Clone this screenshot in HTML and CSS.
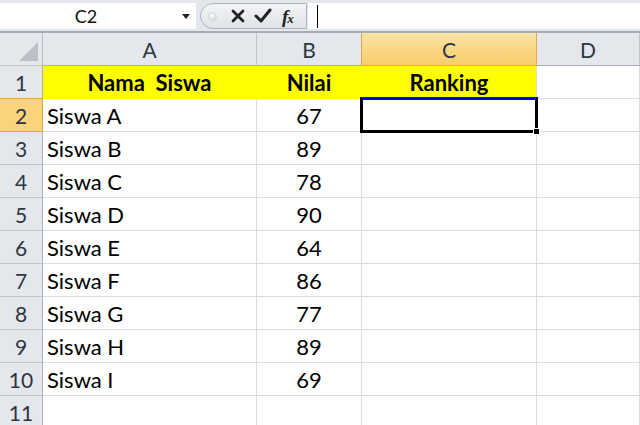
FILE: index.html
```html
<!DOCTYPE html>
<html>
<head>
<meta charset="utf-8">
<link rel="stylesheet" href="styles.css">
</head>
<body>
<div class="app">
  <div class="fbar">
    <div class="namebox">
      <span class="ref">C2</span>
      <span class="dd"></span>
    </div>
    <div class="fxgroup">
      <span class="dot"></span>
      <svg class="ico" width="16" height="16" viewBox="0 0 16 16"><path d="M3 3 L13 13 M13 3 L3 13" stroke="#222" stroke-width="2.8" stroke-linecap="round" fill="none"/></svg>
      <svg class="ico" width="18" height="16" viewBox="0 0 18 16"><path d="M2 8 L7 13 L16 2" stroke="#222" stroke-width="3" stroke-linecap="round" stroke-linejoin="round" fill="none"/></svg>
      <span class="fx"><i>f</i><span class="sx">x</span></span>
    </div>
    <div class="finput"><span class="caret"></span></div>
  </div>
  <div class="sheet">
    <div class="corner"><span class="tri"></span></div>
    <div class="ch">A</div>
    <div class="ch">B</div>
    <div class="ch sel">C</div>
    <div class="ch">D</div>

    <div class="rh">1</div>
    <div class="c hd ca">Nama&nbsp; Siswa</div>
    <div class="c hd cb">Nilai</div>
    <div class="c hd cc">Ranking</div>
    <div class="c"></div>

    <div class="rh sel">2</div>
    <div class="c">Siswa A</div>
    <div class="c num">67</div>
    <div class="c active"><span class="cursor"><span class="handle"></span></span></div>
    <div class="c"></div>

    <div class="rh">3</div>
    <div class="c">Siswa B</div>
    <div class="c num">89</div>
    <div class="c"></div>
    <div class="c"></div>

    <div class="rh">4</div>
    <div class="c">Siswa C</div>
    <div class="c num">78</div>
    <div class="c"></div>
    <div class="c"></div>

    <div class="rh">5</div>
    <div class="c">Siswa D</div>
    <div class="c num">90</div>
    <div class="c"></div>
    <div class="c"></div>

    <div class="rh">6</div>
    <div class="c">Siswa E</div>
    <div class="c num">64</div>
    <div class="c"></div>
    <div class="c"></div>

    <div class="rh">7</div>
    <div class="c">Siswa F</div>
    <div class="c num">86</div>
    <div class="c"></div>
    <div class="c"></div>

    <div class="rh">8</div>
    <div class="c">Siswa G</div>
    <div class="c num">77</div>
    <div class="c"></div>
    <div class="c"></div>

    <div class="rh">9</div>
    <div class="c">Siswa H</div>
    <div class="c num">89</div>
    <div class="c"></div>
    <div class="c"></div>

    <div class="rh">10</div>
    <div class="c">Siswa I</div>
    <div class="c num">69</div>
    <div class="c"></div>
    <div class="c"></div>

    <div class="rh">11</div>
    <div class="c"></div>
    <div class="c"></div>
    <div class="c"></div>
    <div class="c"></div>
  </div>
</div>
</body>
</html>
```
FILE: styles.css
```css
* { box-sizing: border-box; }
html, body { margin: 0; padding: 0; }
body {
  width: 640px;
  height: 425px;
  overflow: hidden;
  background: #fff;
  font-family: Lato, "Open Sans", sans-serif;
}
.app { width: 640px; }

.fbar {
  height: 33px;
  background: #e3e6ea;
  border-bottom: 2px solid #a7adb5;
  padding-top: 3px;
  display: flex;
  align-items: flex-start;
}
.namebox {
  width: 196px;
  height: 26px;
  background: #fff;
  display: flex;
  align-items: center;
  position: relative;
}
.ref {
  width: 172px;
  text-align: center;
  font-size: 18px;
  color: #111;
}
.dd {
  width: 0; height: 0;
  border-left: 4px solid transparent;
  border-right: 4px solid transparent;
  border-top: 5px solid #222;
  margin-left: 10px;
}
.fxgroup {
  width: 107px;
  height: 26px;
  margin-left: 4px;
  border: 1px solid #aeb4bc;
  border-radius: 13px 0 0 13px;
  background: linear-gradient(#f3f4f6, #dfe2e6);
  display: flex;
  align-items: center;
  padding-left: 7px;
}
.dot {
  width: 9px; height: 9px;
  border-radius: 50%;
  background: radial-gradient(circle at 40% 35%, #ffffff, #c9cdd2);
  border: 1px solid #d2d6db;
  margin-right: 13px;
}
.ico { display: block; margin-right: 8px; }
.fx {
  font-family: "Liberation Serif", serif;
  font-weight: bold;
  font-size: 19px;
  color: #222;
  margin-left: 2px;
  line-height: 1;
}
.fx i { font-style: italic; }
.fx .sx { font-style: italic; font-size: 13px; margin-left: -1px; }
.finput {
  flex: 1;
  height: 26px;
  margin-left: 1px;
  background: #fff;
  padding-left: 9px;
  display: flex;
  align-items: center;
}
.caret { width: 1px; height: 23px; background: #000; }

.sheet {
  display: grid;
  grid-template-columns: 43px 214px 105px 175px 103px;
  grid-template-rows: 33px repeat(11, 33px);
}
.corner, .ch, .rh {
  background: #e4e7eb;
  color: #2c3644;
  border-right: 1px solid #c0c5cc;
  border-bottom: 1px solid #c0c5cc;
  display: flex;
  align-items: center;
  justify-content: center;
  font-size: 21px;
}
.corner { position: relative; border-right-color: #b9bec5; }
.tri {
  position: absolute;
  right: 4px; bottom: 4px;
  width: 0; height: 0;
  border-left: 19px solid transparent;
  border-bottom: 19px solid #bcc0c6;
}
.ch { border-bottom-color: #a9b0b8; }
.rh { border-right-color: #a9b0b8; }
.ch.sel {
  background: linear-gradient(#fbe3a6, #f8cd68);
  border-right-color: #e6a548;
  border-left: 1px solid #e6a548;
  border-bottom-color: #e6a548;
  margin-left: -1px;
}
.rh.sel {
  background: #f9d47c;
  border-right-color: #e3a33c;
  border-bottom-color: #e3a33c;
  border-top: 1px solid #e3a33c;
  margin-top: -1px;
}
.c {
  border-right: 1px solid #dadcdd;
  border-bottom: 1px solid #dadcdd;
  font-size: 22px;
  color: #000;
  display: flex;
  align-items: center;
  padding-left: 4px;
  white-space: nowrap;
  position: relative;
}
.num { justify-content: center; padding-left: 0; }
.hd {
  background: #ffff00;
  font-weight: bold;
  justify-content: center;
  padding-left: 0;
  border-right-color: #ffff00;
  border-bottom-color: #ffff00;
}
.hd.cc { border-right-color: #dadcdd; }
.active { z-index: 2; }
.cursor {
  position: absolute;
  left: -2px; top: -2px; right: -2px; bottom: -2px;
  border: 3px solid #000;
  border-top-color: #0000ee;
}
.handle {
  position: absolute;
  right: -5px; bottom: -5px;
  width: 7px; height: 7px;
  background: #000;
  border: 1px solid #fff;
}
```
